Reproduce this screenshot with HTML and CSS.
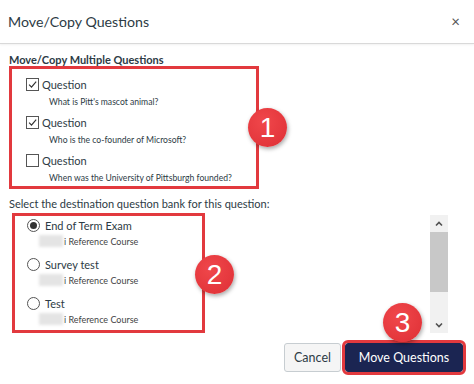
FILE: index.html
```html
<!DOCTYPE html>
<html>
<head>
<meta charset="utf-8">
<link rel="stylesheet" href="styles.css">
</head>
<body>
<div class="dialog">
  <div class="header">
    <span class="title">Move/Copy Questions</span>
    <span class="close">&#215;</span>
  </div>
  <div class="content">
    <div class="heading">Move/Copy Multiple Questions</div>
    <div class="annot box1">
      <div class="q-item">
        <div class="q-row"><span class="check on"><svg viewBox="0 0 12 12"><path d="M2.3 6.2 L4.9 8.8 L10 2.8" /></svg></span><span>Question</span></div>
        <div class="q-sub">What is Pitt's mascot animal?</div>
      </div>
      <div class="q-item">
        <div class="q-row"><span class="check on"><svg viewBox="0 0 12 12"><path d="M2.3 6.2 L4.9 8.8 L10 2.8" /></svg></span><span>Question</span></div>
        <div class="q-sub">Who is the co-founder of Microsoft?</div>
      </div>
      <div class="q-item">
        <div class="q-row"><span class="check"></span><span>Question</span></div>
        <div class="q-sub">When was the University of Pittsburgh founded?</div>
      </div>
      <span class="badge b1">1</span>
    </div>
    <div class="select-label">Select the destination question bank for this question:</div>
    <div class="bank-area">
      <div class="annot box2">
        <div class="b-item">
          <div class="b-row"><span class="radio on"></span><span>End of Term Exam</span></div>
          <div class="b-sub"><span class="blur"></span>i Reference Course</div>
        </div>
        <div class="b-item">
          <div class="b-row"><span class="radio"></span><span>Survey test</span></div>
          <div class="b-sub"><span class="blur"></span>i Reference Course</div>
        </div>
        <div class="b-item">
          <div class="b-row"><span class="radio"></span><span>Test</span></div>
          <div class="b-sub"><span class="blur"></span>i Reference Course</div>
        </div>
        <span class="badge b2">2</span>
      </div>
      <div class="scrollbar">
        <div class="sb-arrow"><svg viewBox="0 0 8 6"><path d="M1 4.5 L4 1.5 L7 4.5" /></svg></div>
        <div class="sb-thumb"></div>
        <div class="sb-track"></div>
        <div class="sb-arrow"><svg viewBox="0 0 8 6"><path d="M1 1.5 L4 4.5 L7 1.5" /></svg></div>
      </div>
    </div>
  </div>
  <div class="footer">
    <button class="btn cancel">Cancel</button>
    <button class="btn primary">Move Questions<span class="badge b3">3</span></button>
  </div>
</div>
</body>
</html>
```

FILE: styles.css
```css
html, body {
  margin: 0;
  padding: 0;
  background: #ffffff;
}
body {
  font-family: Lato, "Open Sans", sans-serif;
  color: #2d3b45;
}
.dialog {
  width: 474px;
  height: 384px;
  position: relative;
  overflow: hidden;
}
.header {
  height: 43px;
  display: flex;
  align-items: center;
  justify-content: space-between;
  padding: 0 14px 0 8px;
  border-bottom: 1px solid #d9d9d9;
  box-shadow: 0 1px 2px rgba(0,0,0,0.06);
}
.title {
  font-size: 14.2px;
  color: #2d3b45;
}
.close {
  font-size: 15px;
  color: #555;
  margin-top: -1px;
}
.content {
  padding: 0 8px 0 9px;
}
.heading {
  margin-top: 9px;
  font-size: 11px;
  font-weight: 700;
  line-height: 14px;
}
.annot {
  border: 3px solid #e2393e;
  position: relative;
}
.box1 {
  margin-top: -1px;
  padding: 6px 0 0 14px;
  height: 111px;
  box-sizing: content-box;
  width: 230px;
}
.q-item {
  margin-bottom: 2px;
}
.q-row {
  display: flex;
  align-items: center;
  height: 18px;
  font-size: 11px;
}
.check {
  width: 11px;
  height: 11px;
  border: 1px solid #555;
  margin-right: 3px;
  display: flex;
  align-items: center;
  justify-content: center;
  background: #fff;
}
.check svg {
  width: 11px;
  height: 11px;
  fill: none;
  stroke: #333;
  stroke-width: 1.3;
}
.q-sub {
  font-size: 8.6px;
  line-height: 18px;
  padding-left: 23px;
  height: 18px;
}
.select-label {
  margin-top: 8px;
  font-size: 11px;
  line-height: 14px;
}
.bank-area {
  margin-top: 2px;
  display: flex;
  align-items: flex-start;
  justify-content: space-between;
  padding-left: 3px;
  padding-right: 18px;
}
.box2 {
  width: 175px;
  height: 114px;
  padding: 0 0 0 12px;
}
.b-item {
  margin-bottom: 7px;
}
.b-row {
  display: flex;
  align-items: center;
  height: 18px;
  font-size: 11px;
}
.radio {
  width: 11px;
  height: 11px;
  border: 1px solid #555;
  border-radius: 50%;
  margin-right: 5px;
  position: relative;
  background: #fff;
}
.radio.on::after {
  content: "";
  position: absolute;
  left: 2px;
  top: 2px;
  width: 7px;
  height: 7px;
  border-radius: 50%;
  background: #333;
}
.b-sub {
  display: flex;
  align-items: center;
  height: 14px;
  font-size: 9px;
  color: #444;
  padding-left: 12px;
}
.blur {
  width: 24px;
  height: 12px;
  background: #e4e4e4;
  filter: blur(1.5px);
  margin-right: 1px;
}
.scrollbar {
  margin-top: 2px;
  width: 18px;
  height: 118px;
  background: #f1f1f1;
  display: flex;
  flex-direction: column;
}
.sb-arrow {
  height: 17px;
  display: flex;
  align-items: center;
  justify-content: center;
}
.sb-arrow svg {
  width: 8px;
  height: 6px;
  fill: none;
  stroke: #505050;
  stroke-width: 1.6;
}
.sb-thumb {
  height: 60px;
  background: #c8c8c8;
}
.sb-track {
  flex: 1;
}
.footer {
  margin-top: 10px;
  display: flex;
  justify-content: flex-end;
  gap: 4px;
  padding-right: 11px;
}
.btn {
  font-family: Lato, "Open Sans", sans-serif;
  font-size: 12.5px;
  height: 29px;
  border-radius: 3px;
  padding: 0;
  margin: 0;
}
.cancel {
  width: 57px;
  background: #f5f5f5;
  border: 1px solid #c7cdd1;
  color: #2d3b45;
}
.primary {
  width: 118px;
  background: #1b2552;
  border: 1px solid #1b2552;
  color: #ffffff;
  position: relative;
  outline: 3px solid #e2393e;
  outline-offset: 0;
}
.badge {
  position: absolute;
  width: 39px;
  height: 39px;
  border-radius: 50%;
  background: radial-gradient(circle at 40% 35%, #f0474b, #de2f35);
  color: #fff;
  font-family: "Liberation Sans", Arial, sans-serif;
  font-size: 28px;
  line-height: 39px;
  text-align: center;
  box-shadow: 1px 2px 4px rgba(0,0,0,0.35);
}
.b1 {
  left: 236px;
  top: 39px;
}
.b2 {
  left: 180px;
  top: 39px;
}
.b3 {
  left: 37px;
  top: -41px;
}
```
